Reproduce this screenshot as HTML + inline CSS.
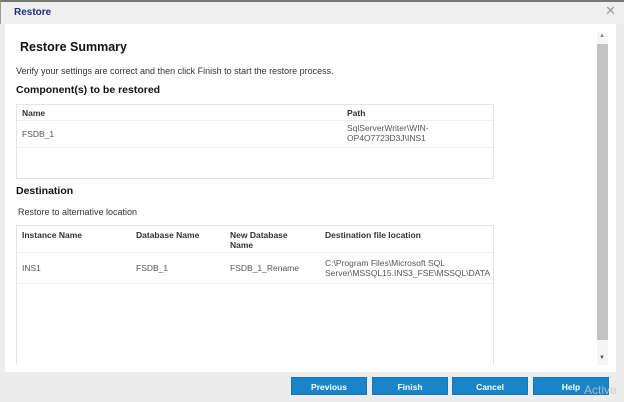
<!DOCTYPE html>
<html><head><style>
*{margin:0;padding:0;box-sizing:border-box}
body{width:624px;height:402px;overflow:hidden;background:#ececec;font-family:"Liberation Sans",Arial,sans-serif;position:relative}
.abs{position:absolute}
.hdr{left:0;top:0;width:624px;height:24px;background:#efefef;border-top:2px solid #777;border-left:1px solid #999}
.hdr span{position:absolute;left:13px;top:5px;font-size:10px;color:#1b2f86;font-weight:bold}
.x{right:8px;top:3px;font-size:13px;color:#999}
.content{left:5px;top:24px;width:611px;height:348px;background:#fff}
h1{position:absolute;left:20px;top:40px;font-size:12.5px;font-weight:bold;color:#111}
.t{font-size:9px;color:#333}
.b{font-size:10.5px;font-weight:bold;color:#111}
.tbl{border:1px solid #e3e3e3;background:#fff}
.hl{height:1px;background:#eee}
.th{font-size:8.5px;font-weight:bold;color:#333}
.td{font-size:8.5px;color:#555;line-height:10px}
.sb{left:597px;top:32px;width:11px;height:333px;background:#f5f5f5}
.thumb{left:597px;top:44px;width:11px;height:296px;background:#c3c3c3}
.btn{top:377px;height:18px;width:76px;background:#1985c8;color:#fff;font-size:8.5px;font-weight:bold;text-align:center;line-height:18px;border:1px solid #1577b4}
</style></head><body>
<div class="abs hdr"><span>Restore</span></div>
<div class="abs x">✕</div>
<div class="abs content"></div>
<h1>Restore Summary</h1>
<div class="abs t" style="left:16px;top:66px">Verify your settings are correct and then click Finish to start the restore process.</div>
<div class="abs b" style="left:16px;top:84px">Component(s) to be restored</div>
<div class="abs tbl" style="left:16px;top:104px;width:478px;height:75px"></div>
<div class="abs hl" style="left:17px;top:120px;width:476px"></div>
<div class="abs hl" style="left:17px;top:147px;width:476px"></div>
<div class="abs th" style="left:22px;top:108px">Name</div>
<div class="abs th" style="left:347px;top:108px">Path</div>
<div class="abs td" style="left:22px;top:129px">FSDB_1</div>
<div class="abs td" style="left:347px;top:123px">SqlServerWriter\WIN-<br>OP4O7723D3J\INS1</div>
<div class="abs b" style="left:16px;top:185px">Destination</div>
<div class="abs t" style="left:18px;top:207px">Restore to alternative location</div>
<div class="abs tbl" style="left:16px;top:225px;width:478px;height:145px"></div>
<div class="abs hl" style="left:17px;top:252px;width:476px"></div>
<div class="abs hl" style="left:17px;top:283px;width:476px"></div>
<div class="abs th" style="left:22px;top:230px">Instance Name</div>
<div class="abs th" style="left:136px;top:230px">Database Name</div>
<div class="abs th" style="left:230px;top:230px;line-height:10px">New Database<br>Name</div>
<div class="abs th" style="left:325px;top:230px">Destination file location</div>
<div class="abs td" style="left:22px;top:263px">INS1</div>
<div class="abs td" style="left:136px;top:263px">FSDB_1</div>
<div class="abs td" style="left:230px;top:263px">FSDB_1_Rename</div>
<div class="abs td" style="left:325px;top:258px;width:166px;overflow:hidden;white-space:nowrap">C:\Program Files\Microsoft SQL<br>Server\MSSQL15.INS3_FSE\MSSQL\DATA</div>
<div class="abs" style="left:5px;top:365px;width:611px;height:7px;background:#fff"></div>
<div class="abs sb"></div>
<div class="abs thumb"></div>
<div class="abs" style="left:599px;top:33px;font-size:6px;color:#888">▲</div>
<div class="abs" style="left:599px;top:355px;font-size:6px;color:#555">▼</div>
<div class="abs" style="left:0;top:372px;width:624px;height:30px;background:#ececec"></div>
<div class="abs btn" style="left:291px">Previous</div>
<div class="abs btn" style="left:372px">Finish</div>
<div class="abs btn" style="left:452px">Cancel</div>
<div class="abs btn" style="left:533px">Help</div>
<div class="abs" style="left:584px;top:383px;font-size:12px;color:rgba(200,200,200,.8)">Activa</div>
</body></html>
